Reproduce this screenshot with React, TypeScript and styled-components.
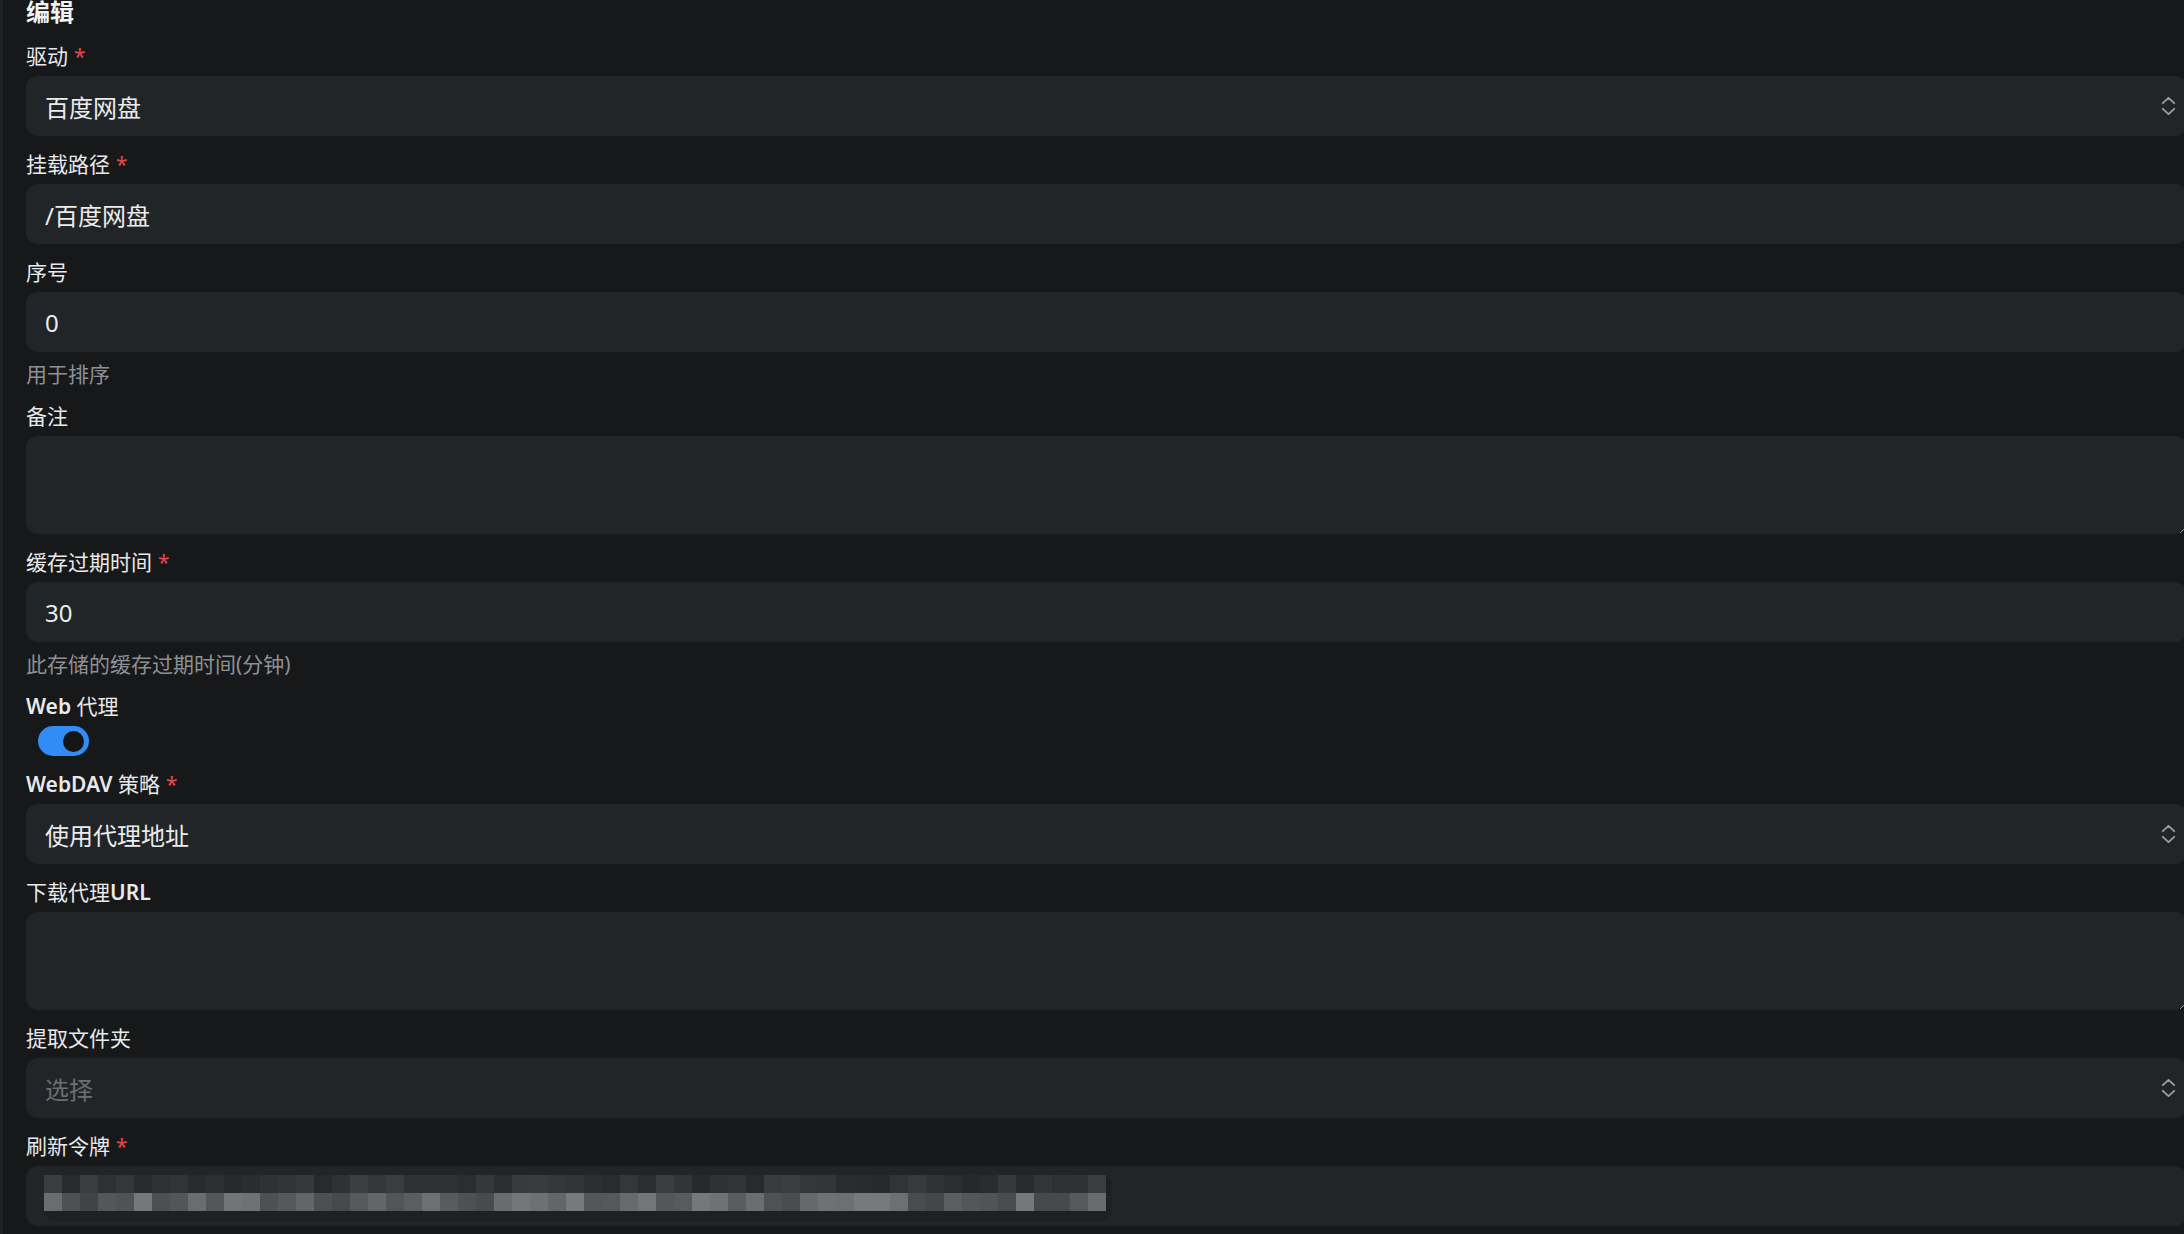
import React from "react";
import styled, { createGlobalStyle } from "styled-components";

const GlobalStyle = createGlobalStyle`
  html, body {
    margin: 0;
    padding: 0;
    background: #17181a;
    overflow: hidden;
  }
  body {
    font-family: "Noto Sans", "Noto Sans CJK SC", sans-serif;
    color: #e6e7e8;
  }
  * { box-sizing: border-box; }
`;

const Page = styled.div`
  min-height: 100vh;
  border-left: 3px solid #1f2123;
  padding-left: 23px;
`;

const Form = styled.div`
  width: 2161px;
  display: flex;
  flex-direction: column;
  gap: 14px;
`;

const Title = styled.h2`
  margin: 0 0 4px 0;
  font-size: 24px;
  line-height: 24px;
  font-weight: 700;
  color: #f1f2f3;
`;

const Field = styled.div`
  display: flex;
  flex-direction: column;
`;

const Label = styled.label`
  font-size: 21px;
  line-height: 28px;
  margin-bottom: 6px;
  color: #e8e9ea;
  font-weight: 400;
`;

const Latin = styled.span`
  font-weight: 600;
`;

const Star = styled.span`
  color: #e5484d;
  margin-left: 6px;
`;

const boxStyles = `
  width: 100%;
  border: none;
  outline: none;
  border-radius: 12px;
  background: #222527;
  color: #ececed;
  font-family: "Noto Sans", "Noto Sans CJK SC", sans-serif;
  font-size: 24px;
`;

const Input = styled.input`
  ${boxStyles}
  height: 60px;
  padding: 0 19px;
`;

const TextArea = styled.textarea`
  ${boxStyles}
  height: 98px;
  padding: 12px 19px;
  resize: vertical;
  display: block;
`;

const SelectButton = styled.button<{ $placeholder?: boolean }>`
  ${boxStyles}
  height: 60px;
  padding: 0 11px 0 19px;
  display: flex;
  align-items: center;
  justify-content: space-between;
  text-align: left;
  cursor: pointer;
  color: ${(p) => (p.$placeholder ? "#6c6f73" : "#ececed")};
`;

const Help = styled.div`
  margin-top: 8px;
  font-size: 21px;
  line-height: 28px;
  color: #8d9095;
`;

const SwitchTrack = styled.button<{ $on: boolean }>`
  width: 51px;
  height: 30px;
  margin-left: 12px;
  border: none;
  padding: 0 5px;
  border-radius: 15px;
  background: ${(p) => (p.$on ? "#318cf6" : "#3a3d40")};
  display: flex;
  align-items: center;
  justify-content: ${(p) => (p.$on ? "flex-end" : "flex-start")};
  cursor: pointer;
`;

const SwitchKnob = styled.span`
  width: 21px;
  height: 21px;
  border-radius: 50%;
  background: #141517;
`;

const TokenBox = styled.div`
  ${boxStyles}
  height: 60px;
  padding: 9px 0 0 18px;
`;

const Chevrons = () => (
  <svg width="15" height="18" viewBox="0 0 15 18" fill="none">
    <path d="M1.8 6.2 L7.5 0.9 L13.2 6.2" stroke="#9b9ea2" strokeWidth="1.8" strokeLinecap="round" strokeLinejoin="round" />
    <path d="M1.8 11.8 L7.5 17.1 L13.2 11.8" stroke="#9b9ea2" strokeWidth="1.8" strokeLinecap="round" strokeLinejoin="round" />
  </svg>
);

function seeded(seed: number) {
  let s = seed;
  return () => {
    s = (s * 9301 + 49297) % 233280;
    return s / 233280;
  };
}

const Mosaic = () => {
  const rnd = seeded(17);
  const cols = 59;
  const cw = 18;
  const cells: React.ReactNode[] = [];
  for (let i = 0; i < cols; i++) {
    const t = Math.round(38 + rnd() * 22);
    cells.push(
      <rect key={"t" + i} x={i * cw} y={0} width={cw} height={18} fill={`rgb(${t},${t + 3},${t + 5})`} />
    );
    const base = i < 4 ? 58 : 68;
    const b = Math.round(base + rnd() * 52);
    cells.push(
      <rect key={"b" + i} x={i * cw} y={18} width={cw} height={18} fill={`rgb(${b},${b + 3},${b + 4})`} />
    );
  }
  return (
    <svg width={cols * cw + 10} height={46} viewBox={`0 0 ${cols * cw + 10} 46`}>
      <rect x={0} y={0} width={cols * cw + 6} height={46} rx={10} fill="#1e2123" />
      {cells}
    </svg>
  );
};

export default function App() {
  return (
    <>
      <GlobalStyle />
      <Page>
        <Form>
          <Title>编辑</Title>

          <Field>
            <Label>
              驱动<Star>*</Star>
            </Label>
            <SelectButton type="button">
              <span>百度网盘</span>
              <Chevrons />
            </SelectButton>
          </Field>

          <Field>
            <Label>
              挂载路径<Star>*</Star>
            </Label>
            <Input defaultValue="/百度网盘" />
          </Field>

          <Field>
            <Label>序号</Label>
            <Input defaultValue="0" />
            <Help>用于排序</Help>
          </Field>

          <Field>
            <Label>备注</Label>
            <TextArea />
          </Field>

          <Field>
            <Label>
              缓存过期时间<Star>*</Star>
            </Label>
            <Input defaultValue="30" />
            <Help>此存储的缓存过期时间(分钟)</Help>
          </Field>

          <Field>
            <Label>
              <Latin>Web</Latin> 代理
            </Label>
            <SwitchTrack type="button" $on>
              <SwitchKnob />
            </SwitchTrack>
          </Field>

          <Field>
            <Label>
              <Latin>WebDAV</Latin> 策略<Star>*</Star>
            </Label>
            <SelectButton type="button">
              <span>使用代理地址</span>
              <Chevrons />
            </SelectButton>
          </Field>

          <Field>
            <Label>
              下载代理<Latin>URL</Latin>
            </Label>
            <TextArea />
          </Field>

          <Field>
            <Label>提取文件夹</Label>
            <SelectButton type="button" $placeholder>
              <span>选择</span>
              <Chevrons />
            </SelectButton>
          </Field>

          <Field>
            <Label>
              刷新令牌<Star>*</Star>
            </Label>
            <TokenBox>
              <Mosaic />
            </TokenBox>
          </Field>
        </Form>
      </Page>
    </>
  );
}
